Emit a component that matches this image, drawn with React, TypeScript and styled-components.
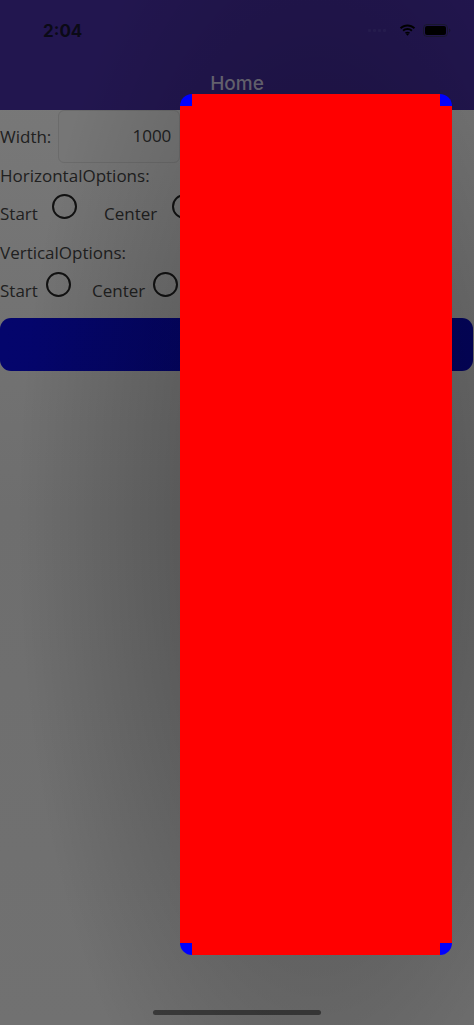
import React from "react";
import styled, { createGlobalStyle } from "styled-components";

const GlobalStyle = createGlobalStyle`
  html, body {
    margin: 0;
    padding: 0;
    background: #6c6c6c;
  }
  * {
    box-sizing: border-box;
  }
`;

const Screen = styled.div`
  position: relative;
  width: 474px;
  height: 1025px;
  overflow: hidden;
  display: flex;
  flex-direction: column;
  background: linear-gradient(180deg, #7a7a7a 0%, #6e6e6e 50%, #717171 100%);
  font-family: "Open Sans", "Noto Sans", sans-serif;
  color: #202020;
`;

const Header = styled.header`
  height: 110px;
  background: #22164f;
  display: flex;
  flex-direction: column;
`;

const StatusBar = styled.div`
  height: 60px;
  display: flex;
  align-items: center;
  justify-content: space-between;
  padding: 0 23px 0 43px;
`;

const Time = styled.span`
  font-family: Inter, "Liberation Sans", sans-serif;
  font-weight: 700;
  font-size: 17px;
  color: #0b0a16;
  margin-top: 1px;
`;

const StatusIcons = styled.div`
  display: flex;
  align-items: center;
  gap: 7px;
`;

const Signal = styled.div`
  display: flex;
  align-items: flex-end;
  gap: 2px;
  margin-right: 6px;

  span {
    width: 3px;
    height: 3px;
    border-radius: 1px;
    background: #281e54;
  }
`;

const Title = styled.h1`
  margin: 0;
  text-align: center;
  font-family: Inter, "Liberation Sans", sans-serif;
  font-size: 19px;
  font-weight: 500;
  color: #6d6b78;
  line-height: 24px;
  margin-top: 12px;
`;

const Content = styled.main`
  display: flex;
  flex-direction: column;
  font-size: 17px;
`;

const FieldRow = styled.div`
  display: flex;
  align-items: center;
  gap: 7px;
  height: 53px;
`;

const Label = styled.span`
  line-height: 22px;
`;

const Entry = styled.div`
  width: 122px;
  height: 53px;
  border: 1px solid #6b6b6b;
  border-radius: 6px;
  background: #767676;
  display: flex;
  align-items: center;
  justify-content: flex-end;
  padding: 0 8px 2px 0;
`;

const Heading = styled.div<{ $top: number }>`
  margin-top: ${(p) => p.$top}px;
  line-height: 22px;
`;

const RadioRow = styled.div<{ $gap: number; $top: number }>`
  display: flex;
  gap: ${(p) => p.$gap}px;
  margin-top: ${(p) => p.$top}px;
  height: 31px;
`;

const RadioOption = styled.div`
  display: flex;
  align-items: flex-start;
`;

const RadioLabel = styled.span<{ $slot: number; $drop: number }>`
  width: ${(p) => p.$slot}px;
  line-height: 22px;
  margin-top: ${(p) => p.$drop}px;
  white-space: nowrap;
`;

const Radio = styled.span`
  width: 25px;
  height: 25px;
  border: 2px solid #111;
  border-radius: 50%;
`;

const Button = styled.div`
  margin-top: 15px;
  height: 53px;
  width: 473px;
  border-radius: 11px;
  background: linear-gradient(90deg, #04056c 0%, #03045f 100%);
`;

const HomeIndicator = styled.div`
  position: absolute;
  left: 153px;
  bottom: 10px;
  width: 168px;
  height: 5px;
  border-radius: 3px;
  background: #3b3b3b;
`;

const Overlay = styled.div`
  position: absolute;
  inset: 0;
  padding: 94px 0 0 180px;
  background: radial-gradient(ellipse 300px 700px at 316px 524px, rgba(0, 0, 0, 0.34), rgba(0, 0, 0, 0) 100%);
`;

const Popup = styled.div`
  width: 272px;
  height: 861px;
  border-radius: 12px;
  overflow: hidden;
  display: grid;
  grid-template-columns: 12px 1fr 12px;
  grid-template-rows: 12px 1fr 12px;
`;

const Cell = styled.div<{ $corner?: boolean }>`
  background: ${(p) => (p.$corner ? "#0000ff" : "#ff0000")};
`;

function Wifi() {
  return (
    <svg width="17" height="13" viewBox="0 0 17 13">
      <path d="M8.5 2.4c2.4 0 4.6.9 6.3 2.5l1.3-1.3C14 1.6 11.4.5 8.5.5S3 1.6.9 3.6l1.3 1.3C3.9 3.3 6.1 2.4 8.5 2.4z" fill="#000" />
      <path d="M8.5 6c1.4 0 2.7.5 3.7 1.4l1.3-1.3C12.2 4.9 10.4 4.1 8.5 4.1S4.8 4.9 3.5 6.1l1.3 1.3C5.8 6.5 7.1 6 8.5 6z" fill="#000" />
      <path d="M8.5 9.5c.6 0 1.1.2 1.5.6l-1.5 1.6L7 10.1c.4-.4.9-.6 1.5-.6z" fill="#000" />
      <path d="M8.5 7.7c1 0 1.9.4 2.6 1l-1.1 1.1c-.4-.3-.9-.5-1.5-.5s-1.1.2-1.5.5L5.9 8.7c.7-.6 1.6-1 2.6-1z" fill="#000" />
    </svg>
  );
}

function Battery() {
  return (
    <svg width="28" height="13" viewBox="0 0 28 13">
      <rect x="0.5" y="0.5" width="24" height="12" rx="3.5" fill="none" stroke="#1a1830" />
      <rect x="2" y="2" width="21" height="9" rx="2" fill="#000" />
      <path d="M26 4.5v4c.8-.3 1.3-1.1 1.3-2s-.5-1.7-1.3-2z" fill="#1a1830" />
    </svg>
  );
}

export default function App() {
  return (
    <>
      <GlobalStyle />
      <Screen>
        <Header>
          <StatusBar>
            <Time>2:04</Time>
            <StatusIcons>
              <Signal>
                <span />
                <span />
                <span />
                <span />
              </Signal>
              <Wifi />
              <Battery />
            </StatusIcons>
          </StatusBar>
          <Title>Home</Title>
        </Header>

        <Content>
          <FieldRow>
            <Label>Width:</Label>
            <Entry>1000</Entry>
          </FieldRow>

          <Heading $top={2}>HorizontalOptions:</Heading>
          <RadioRow $gap={27} $top={7}>
            <RadioOption>
              <RadioLabel $slot={52} $drop={9}>Start</RadioLabel>
              <Radio />
            </RadioOption>
            <RadioOption>
              <RadioLabel $slot={68} $drop={9}>Center</RadioLabel>
              <Radio />
            </RadioOption>
          </RadioRow>

          <Heading $top={17}>VerticalOptions:</Heading>
          <RadioRow $gap={21} $top={8}>
            <RadioOption>
              <RadioLabel $slot={46} $drop={8}>Start</RadioLabel>
              <Radio />
            </RadioOption>
            <RadioOption>
              <RadioLabel $slot={61} $drop={8}>Center</RadioLabel>
              <Radio />
            </RadioOption>
          </RadioRow>

          <Button />
        </Content>

        <HomeIndicator />

        <Overlay>
          <Popup>
            <Cell $corner />
            <Cell />
            <Cell $corner />
            <Cell />
            <Cell />
            <Cell />
            <Cell $corner />
            <Cell />
            <Cell $corner />
          </Popup>
        </Overlay>
      </Screen>
    </>
  );
}
